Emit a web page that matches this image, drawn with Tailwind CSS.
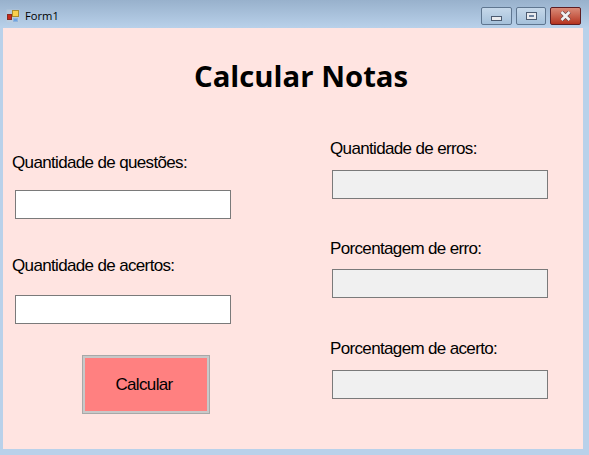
<!DOCTYPE html>
<html>
<head>
  <meta charset="UTF-8" />
  <title>Form1</title>
  <script src="https://cdn.jsdelivr.net/npm/@tailwindcss/browser@4"></script>
</head>
<body class="w-[589px] h-[455px] overflow-hidden bg-[#b9d1ea] font-['Liberation_Sans',sans-serif]">
  <div class="flex flex-col h-full">
    <!-- title bar -->
    <div class="h-[28px] flex items-start justify-between bg-gradient-to-b from-[#98b1cc] to-[#b9d1ea] pl-[6px] pr-[8px]">
      <div class="flex items-center gap-[5px] pt-[9px]">
        <svg width="14" height="14" viewBox="0 0 14 14">
          <rect x="0.5" y="0.5" width="13" height="13" fill="#c5cfdb" opacity="0.5"/>
          <rect x="1.5" y="5.5" width="4" height="5" fill="#c8281c" stroke="#8a2a20" stroke-width="1"/>
          <rect x="6.5" y="1.5" width="6" height="6" fill="#f9cf4d" stroke="#a98b2e" stroke-width="1"/>
          <rect x="7.5" y="9.5" width="4" height="3" fill="#6ea2e0" stroke="#8fb4de" stroke-width="1"/>
        </svg>
        <span class="text-[11.2px] leading-[14px] text-black font-['Open_Sans',sans-serif]">Form1</span>
      </div>
      <div class="flex gap-[4px] pt-[7px]">
        <div class="w-[31px] h-[18px] rounded-[2px] border border-[#5f7690] bg-gradient-to-b from-[#c6d8ea] to-[#a5c0da] flex items-center justify-center">
          <div class="w-[11px] h-[5px] mt-[5px] bg-[#e8eaee] border border-[#4b5a70]"></div>
        </div>
        <div class="w-[30px] h-[18px] rounded-[2px] border border-[#5f7690] bg-gradient-to-b from-[#c6d8ea] to-[#a5c0da] flex items-center justify-center">
          <div class="w-[11px] h-[8px] bg-[#e8eaee] border border-[#4b5a70] flex items-center justify-center">
            <div class="w-[5px] h-[2px] bg-[#6f84a0]"></div>
          </div>
        </div>
        <div class="w-[31px] h-[18px] rounded-[2px] border border-[#5e1d22] bg-gradient-to-b from-[#d98a78] to-[#b5301c] flex items-center justify-center">
          <svg width="13" height="10" viewBox="0 0 13 10">
            <path d="M2.5 1 L10.5 9 M10.5 1 L2.5 9" stroke="#5a3a3e" stroke-width="3.8"/>
            <path d="M2.5 1 L10.5 9 M10.5 1 L2.5 9" stroke="#f1f1f1" stroke-width="2.6"/>
          </svg>
        </div>
      </div>
    </div>

    <!-- form body -->
    <div class="ml-[3px] mr-[6px] h-[421px] bg-[#ffe4e1]">
      <h1 class="pt-[28px] pl-[191px] text-[29.3px] leading-[40px] font-bold text-black font-['Open_Sans',sans-serif]">Calcular Notas</h1>
      <div class="flex mt-[15px]">
        <div class="w-[327px] pl-[9px] pt-[43px] flex flex-col items-start">
          <label class="text-[17px] leading-[18px] tracking-[-0.65px] text-black">Quantidade de questões:</label>
          <input class="mt-[18px] ml-[3px] w-[216px] h-[29px] bg-white border border-[#7a7a7a]" />
          <label class="mt-[38px] text-[17px] leading-[18px] tracking-[-0.65px] text-black">Quantidade de acertos:</label>
          <input class="mt-[20px] ml-[3px] w-[216px] h-[29px] bg-white border border-[#7a7a7a]" />
          <button class="mt-[31px] ml-[70px] w-[128px] h-[59px] pr-[4px] bg-[#ff8080] border-[3px] border-[#c8c8c8] outline outline-1 outline-[#a8a8a8] -outline-offset-1 text-[17px] tracking-[-0.65px] text-black">Calcular</button>
        </div>
        <div class="flex-1 pt-[29px] flex flex-col items-start">
          <label class="text-[17px] leading-[18px] tracking-[-0.65px] text-black">Quantidade de erros:</label>
          <input disabled class="mt-[12px] ml-[2px] w-[216px] h-[29px] bg-[#f0f0f0] border border-[#7a7a7a]" />
          <label class="mt-[41px] text-[17px] leading-[18px] tracking-[-0.65px] text-black">Porcentagem de erro:</label>
          <input disabled class="mt-[11px] ml-[2px] w-[216px] h-[29px] bg-[#f0f0f0] border border-[#7a7a7a]" />
          <label class="mt-[42px] text-[17px] leading-[18px] tracking-[-0.65px] text-black">Porcentagem de acerto:</label>
          <input disabled class="mt-[12px] ml-[2px] w-[216px] h-[29px] bg-[#f0f0f0] border border-[#7a7a7a]" />
        </div>
      </div>
    </div>
  </div>
</body>
</html>
